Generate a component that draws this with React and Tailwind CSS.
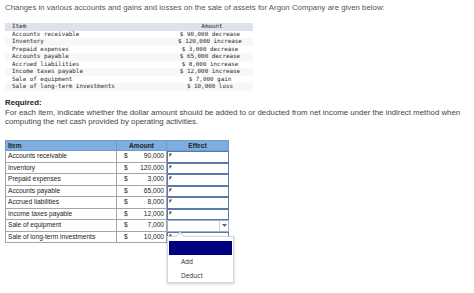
const changes = [
  ['Accounts receivable', '$ 90,000 decrease'],
  ['Inventory', '$ 120,000 increase'],
  ['Prepaid expenses', '$ 3,000 decrease'],
  ['Accounts payable', '$ 65,000 decrease'],
  ['Accrued liabilities', '$ 8,000 increase'],
  ['Income taxes payable', '$ 12,000 increase'],
  ['Sale of equipment', '$ 7,000 gain'],
  ['Sale of long-term investments', '$ 10,000 loss'],
];

const rows = [
  ['Accounts receivable', '90,000'],
  ['Inventory', '120,000'],
  ['Prepaid expenses', '3,000'],
  ['Accounts payable', '65,000'],
  ['Accrued liabilities', '8,000'],
  ['Income taxes payable', '12,000'],
  ['Sale of equipment', '7,000'],
  ['Sale of long-term investments', '10,000'],
];

function Tick() {
  return (
    <svg width="4" height="5" viewBox="0 0 4 5" className="absolute left-[1px] top-[1px]">
      <path d="M0.5 0.5 L3 0.5 L0.5 4 Z" fill="#333" />
    </svg>
  );
}

function EffectCell({ open }) {
  if (open) {
    return (
      <div className="h-full border border-[#9fb0cc] border-t-dotted flex bg-white">
        <div className="flex-1" />
        <div className="w-[9px] border-l border-[#c8d0dc] flex items-center justify-center">
          <svg width="5" height="3" viewBox="0 0 5 3">
            <path d="M0 0 L5 0 L2.5 3 Z" fill="#666" />
          </svg>
        </div>
      </div>
    );
  }
  return (
    <div className="relative h-full border border-[#5a78ab] bg-white">
      <Tick />
    </div>
  );
}

export default function App() {
  return (
    <div className="w-[474px] h-[293px] bg-white overflow-hidden px-[5px] pt-[3px] font-['Liberation_Sans',Arial,sans-serif]">
      <p className="text-[7.85px] leading-[9px] text-[#555]">
        Changes in various accounts and gains and losses on the sale of assets for Argon Company are given below:
      </p>

      {/* monospace data table */}
      <div className="mt-[11px] w-[248px] font-['DejaVu_Sans_Mono',monospace] text-[5.9px] text-[#2a2a2a]">
        <div className="flex h-[7.5px] items-center bg-[#dde2eb]">
          <div className="w-[170px] pl-[7px]">Item</div>
          <div className="flex-1 text-center pr-[4px]">Amount</div>
        </div>
        {changes.map(([item, amt], i) => (
          <div
            key={item}
            className={`flex h-[7.5px] items-center ${i % 2 === 1 ? 'bg-[#f7f7f7]' : 'bg-white'}`}
          >
            <div className="w-[170px] pl-[7px] whitespace-pre">{item}</div>
            <div className="flex-1 text-center pr-[8px] whitespace-pre">{amt}</div>
          </div>
        ))}
      </div>

      <p className="mt-[7px] text-[7.85px] leading-[9px] font-bold text-[#222]">Required:</p>
      <p className="mt-[1px] text-[7.85px] leading-[9px] text-[#444]">
        For each item, indicate whether the dollar amount should be added to or deducted from net income under the indirect method when computing the net cash provided by operating activities.
      </p>

      {/* answer table */}
      <div className="relative mt-[14.5px] w-[224px] text-[6.6px] text-[#222]">
        <div className="flex h-[11px] bg-[#7eaee0] border border-[#6d9bcc] font-bold">
          <div className="w-[111px] pl-[2px] flex items-center border-r border-[#6d9bcc]">Item</div>
          <div className="w-[50px] flex items-center justify-center border-r border-[#6d9bcc]">Amount</div>
          <div className="flex-1 flex items-center justify-center">Effect</div>
        </div>
        {rows.map(([item, amt], i) => (
          <div key={item} className="flex h-[11.5px]">
            <div className="w-[112px] pl-[2px] flex items-center border-l border-b border-r border-[#a5a5a5]">
              {item}
            </div>
            <div className="w-[50px] flex items-center border-b border-r border-[#a5a5a5] pl-[7px] pr-[2px]">
              <span>$</span>
              <span className="ml-auto">{amt}</span>
            </div>
            <div className="flex-1">
              <EffectCell open={i === 6} />
            </div>
          </div>
        ))}

        {/* dropdown menu */}
        <div className="absolute left-[162px] top-[96px] w-[67px] h-[47px] bg-white border border-[#d4d4d4] shadow-[0_1px_3px_rgba(0,0,0,0.2)] pt-[4px] px-[1px] font-['Open_Sans',sans-serif] text-[6.5px] text-[#333]">
          <div className="absolute left-[9px] top-[-4px] w-[6px] h-[6px] rotate-45 bg-white border-l border-t border-[#d4d4d4]" />
          <div className="h-[14px] bg-[#000080]" />
          <div className="h-[14px] flex items-center pl-[12px]">Add</div>
          <div className="h-[14px] flex items-center pl-[12px]">Deduct</div>
        </div>
      </div>
    </div>
  );
}
